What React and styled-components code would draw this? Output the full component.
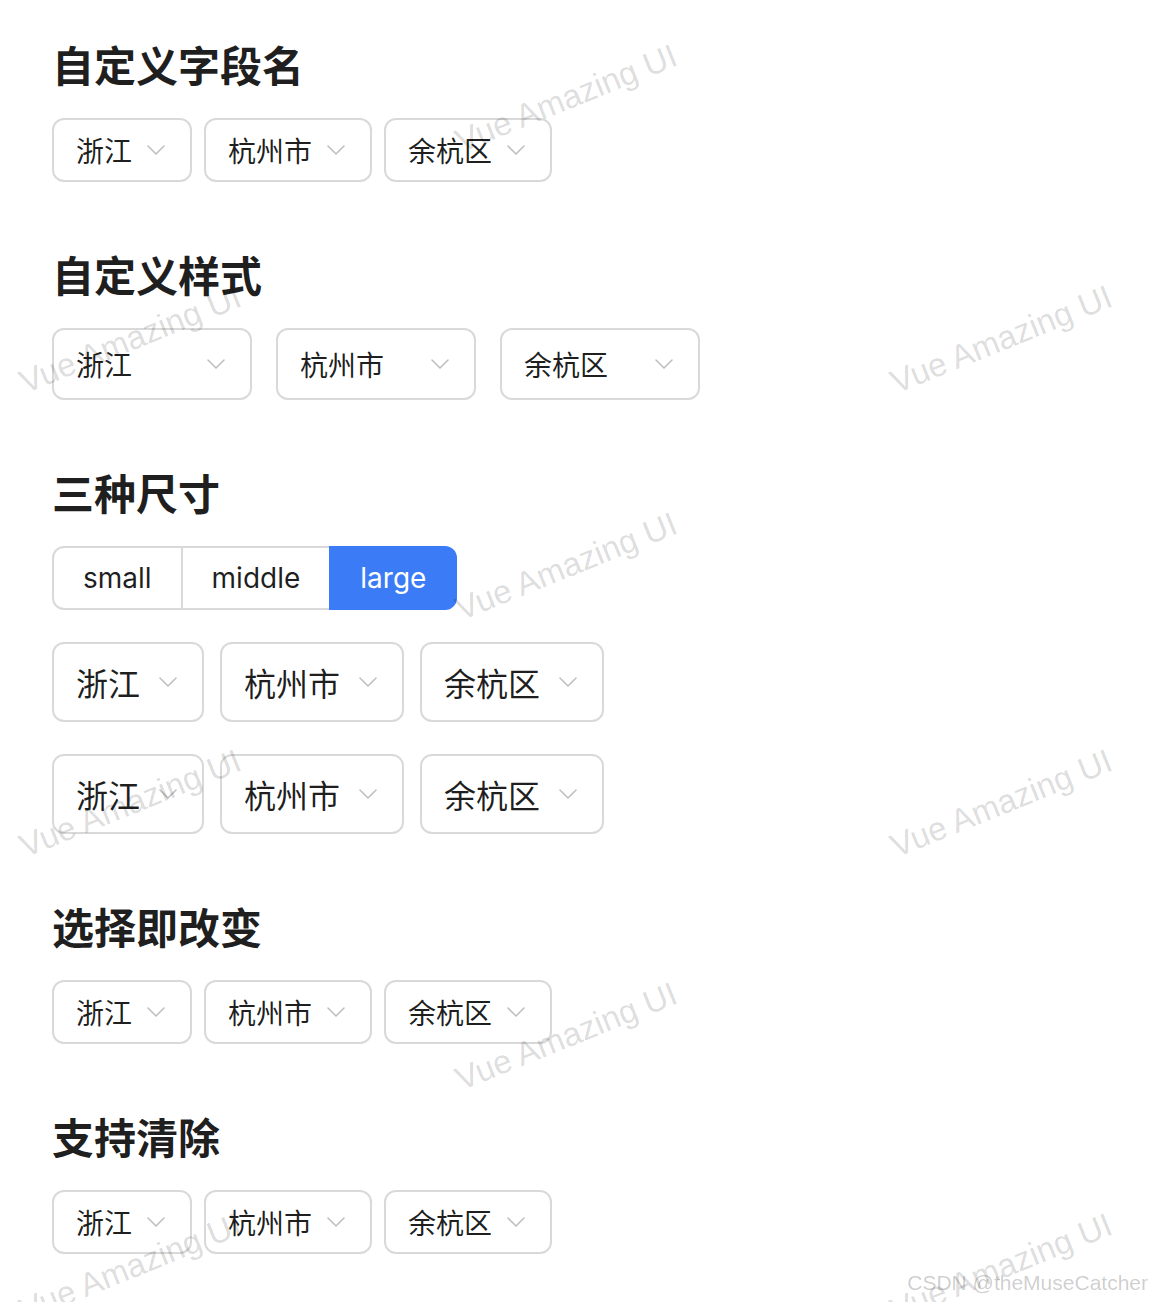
import React from "react";
import styled, { createGlobalStyle } from "styled-components";

const GlobalStyle = createGlobalStyle`
  html, body { margin: 0; padding: 0; background: #ffffff; }
  body {
    font-family: "Noto Sans CJK SC", "Noto Sans", sans-serif;
    color: rgba(0, 0, 0, 0.88);
  }
  * { box-sizing: border-box; }
`;

const Page = styled.div`
  position: relative;
  min-height: 1302px;
  padding: 34px 52px 0;
  overflow: hidden;
`;

const Section = styled.section`
  display: flex;
  flex-direction: column;
  align-items: flex-start;
  margin-bottom: 62px;
`;

const Title = styled.h2`
  margin: 0 0 24px;
  font-size: 42px;
  line-height: 60px;
  font-weight: 700;
  color: rgba(0, 0, 0, 0.88);
`;

const Stack = styled.div`
  display: flex;
  flex-direction: column;
  gap: 32px;
`;

const Row = styled.div`
  display: flex;
  gap: ${(p) => p.$gap}px;
`;

const sizes = {
  default: { h: 64, font: 28, gap: 15 },
  large: { h: 80, font: 32, gap: 19 },
  styled: { h: 72, font: 28, gap: 15 },
};

const SelectBox = styled.div`
  display: flex;
  align-items: center;
  justify-content: ${(p) => (p.$width ? "space-between" : "flex-start")};
  gap: ${(p) => sizes[p.$size].gap}px;
  width: ${(p) => (p.$width ? `${p.$width}px` : "auto")};
  height: ${(p) => sizes[p.$size].h}px;
  padding: 0 25px 1px 22px;
  border: 2px solid #d9d9d9;
  border-radius: 12px;
  background: #fff;
  font-size: ${(p) => sizes[p.$size].font}px;
  color: rgba(0, 0, 0, 0.88);
  white-space: nowrap;
`;

const Label = styled.span`
  line-height: 1;
`;

const Arrow = styled.svg`
  width: 18px;
  height: 10px;
  flex: none;
`;

const Chevron = () => (
  <Arrow viewBox="0 0 18 10" fill="none">
    <polyline
      points="1,1 9,9 17,1"
      stroke="rgba(0,0,0,0.25)"
      strokeWidth="1.6"
      strokeLinecap="round"
      strokeLinejoin="round"
    />
  </Arrow>
);

const Select = ({ label, size = "default", width }) => (
  <SelectBox $size={size} $width={width}>
    <Label>{label}</Label>
    <Chevron />
  </SelectBox>
);

const Cascade = ({ size = "default", width, gap = 12 }) => (
  <Row $gap={gap}>
    <Select label="浙江" size={size} width={width} />
    <Select label="杭州市" size={size} width={width} />
    <Select label="余杭区" size={size} width={width} />
  </Row>
);

const Segmented = styled.div`
  display: flex;
`;

const Segment = styled.div`
  position: relative;
  display: flex;
  align-items: center;
  height: 64px;
  padding: 0 29px;
  margin-left: -2px;
  border: 2px solid ${(p) => (p.$active ? "#3b7cf6" : "#d9d9d9")};
  background: ${(p) => (p.$active ? "#3b7cf6" : "#fff")};
  color: ${(p) => (p.$active ? "#fff" : "rgba(0,0,0,0.88)")};
  z-index: ${(p) => (p.$active ? 1 : 0)};
  font-family: Inter, "Noto Sans", sans-serif;
  font-size: 28px;
  &:first-child {
    margin-left: 0;
    border-radius: 12px 0 0 12px;
  }
  &:last-child {
    border-radius: 0 12px 12px 0;
  }
`;

const Overlay = styled.div`
  position: absolute;
  inset: 0;
  pointer-events: none;
  z-index: 10;
`;

const Mark = styled.span`
  position: absolute;
  transform: translate(-50%, -50%) rotate(-22deg);
  font-family: "Liberation Sans", Arial, sans-serif;
  font-size: 33px;
  line-height: 1;
  color: rgba(0, 0, 0, 0.15);
  white-space: nowrap;
`;

const Credit = styled.span`
  position: absolute;
  right: 4px;
  top: 1272px;
  font-family: "Liberation Sans", Arial, sans-serif;
  font-size: 21px;
  line-height: 1;
  color: rgba(0, 0, 0, 0.2);
  white-space: nowrap;
`;

const marks = [
  [566, 98],
  [130, 339],
  [1001, 339],
  [566, 566],
  [130, 803],
  [1001, 803],
  [566, 1036],
  [130, 1267],
  [1001, 1267],
];

export default function App() {
  return (
    <>
      <GlobalStyle />
      <Page>
        <Section>
          <Title>自定义字段名</Title>
          <Cascade />
        </Section>
        <Section>
          <Title>自定义样式</Title>
          <Cascade size="styled" width={200} gap={24} />
        </Section>
        <Section>
          <Title>三种尺寸</Title>
          <Stack>
            <Segmented>
              <Segment>small</Segment>
              <Segment>middle</Segment>
              <Segment $active>large</Segment>
            </Segmented>
            <Cascade size="large" gap={16} />
            <Cascade size="large" gap={16} />
          </Stack>
        </Section>
        <Section>
          <Title>选择即改变</Title>
          <Cascade />
        </Section>
        <Section>
          <Title>支持清除</Title>
          <Cascade />
        </Section>
        <Overlay>
          {marks.map(([x, y], i) => (
            <Mark key={i} style={{ left: x, top: y }}>
              Vue Amazing UI
            </Mark>
          ))}
          <Credit>CSDN @theMuseCatcher</Credit>
        </Overlay>
      </Page>
    </>
  );
}
